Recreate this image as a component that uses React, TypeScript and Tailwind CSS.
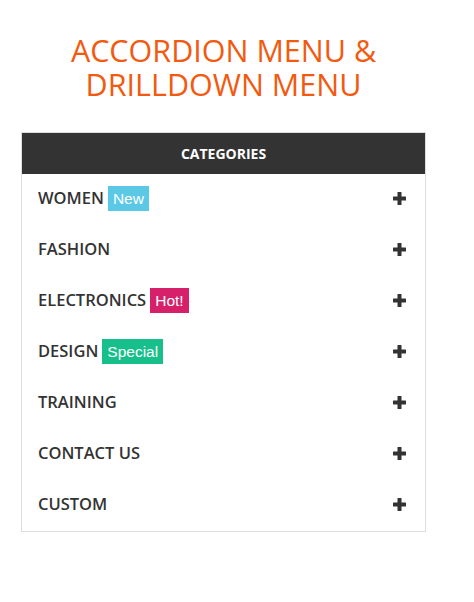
const items = [
  { label: "WOMEN", badge: "New", color: "bg-[#5bc8e6]" },
  { label: "FASHION" },
  { label: "ELECTRONICS", badge: "Hot!", color: "bg-[#d6216a]" },
  { label: "DESIGN", badge: "Special", color: "bg-[#17c08b]" },
  { label: "TRAINING" },
  { label: "CONTACT US" },
  { label: "CUSTOM" },
];

function PlusIcon() {
  return (
    <svg width="13" height="13" viewBox="0 0 13 13" className="text-[#333333]">
      <rect x="4.5" y="0" width="4" height="13" rx="0.5" fill="currentColor" />
      <rect x="0" y="4.5" width="13" height="4" rx="0.5" fill="currentColor" />
    </svg>
  );
}

export default function App() {
  return (
    <div className="min-h-[602px] w-[447px] bg-white px-[21px] pt-[33px] font-['Open_Sans',sans-serif]">
      <h1 className="text-center text-[30.5px] font-normal leading-[34px] text-[#f25a0f]">
        ACCORDION MENU &amp;
        <br />
        DRILLDOWN MENU
      </h1>

      <div className="mt-[31px] border border-[#dddddd]">
        <div className="flex h-[41px] items-center justify-center bg-[#333333] text-[14px] font-bold text-white">
          CATEGORIES
        </div>
        <ul>
          {items.map((item) => (
            <li
              key={item.label}
              className="flex h-[51px] items-center justify-between pb-[2px] pl-[16px] pr-[19px]"
            >
              <div className="flex items-center">
                <span className="text-[16.5px] font-semibold text-[#333333]">
                  {item.label}
                </span>
                {item.badge && (
                  <span
                    className={`ml-[4px] flex h-[25px] items-center px-[5px] font-['Liberation_Sans',sans-serif] text-[15.5px] text-white ${item.color}`}
                  >
                    {item.badge}
                  </span>
                )}
              </div>
              <PlusIcon />
            </li>
          ))}
        </ul>
      </div>
    </div>
  );
}
